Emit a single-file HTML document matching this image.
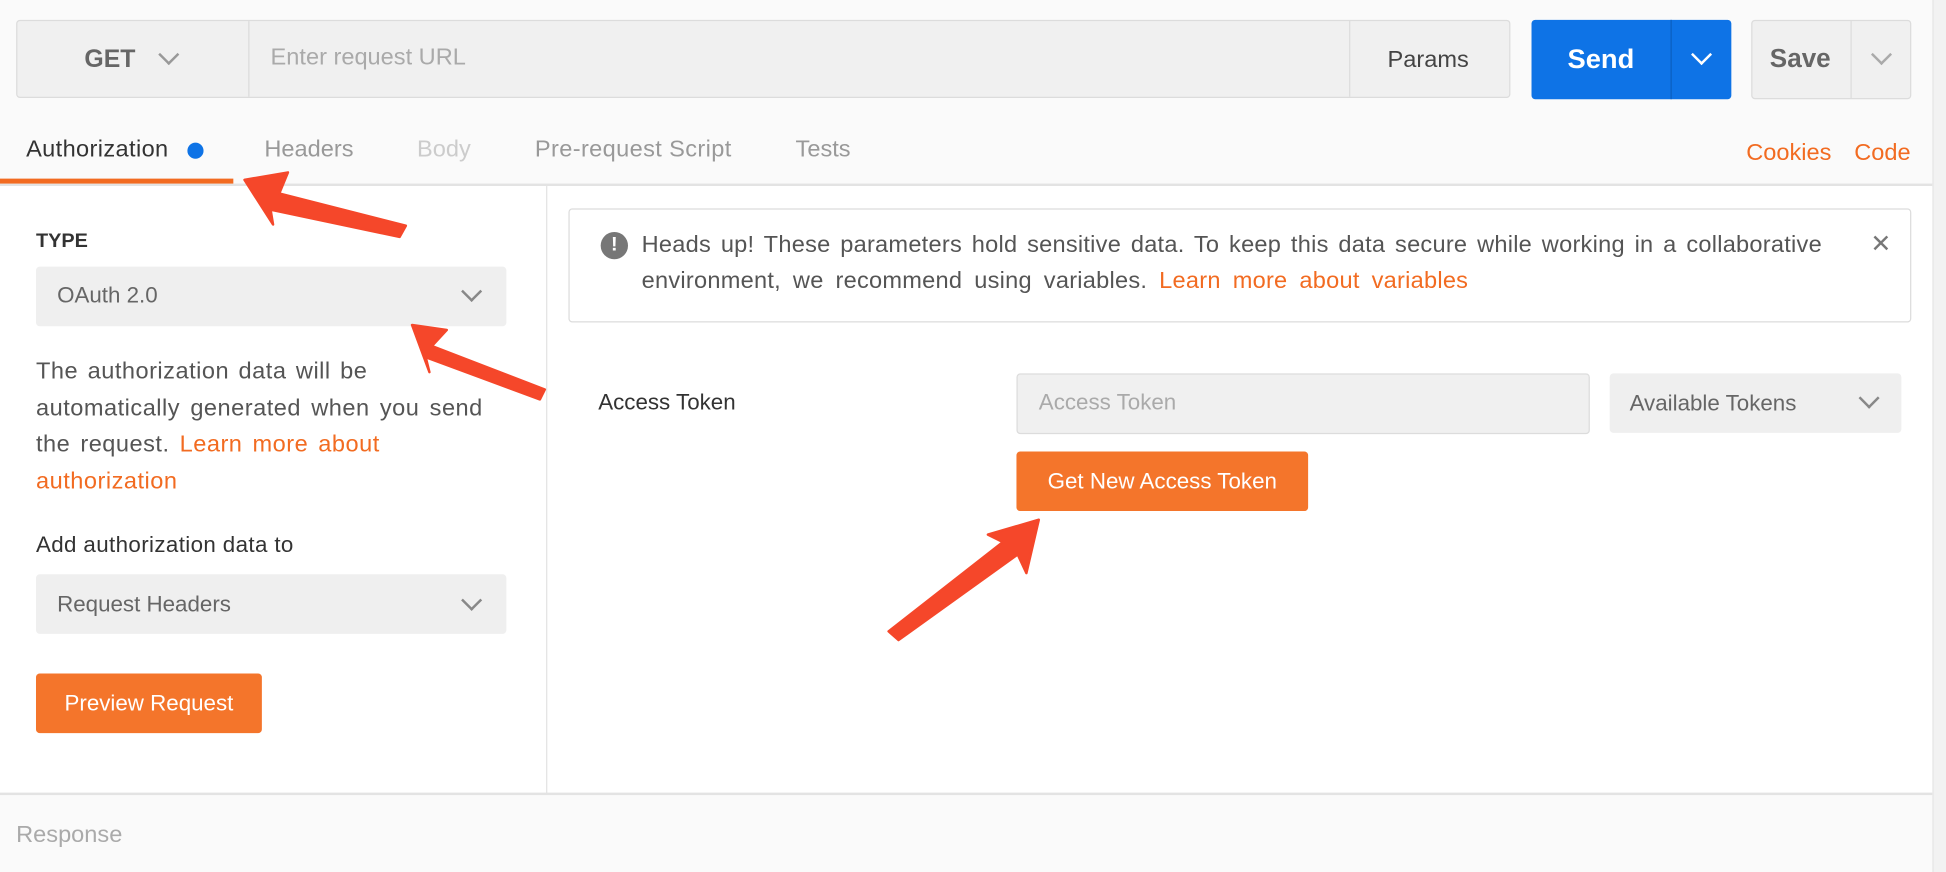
<!DOCTYPE html>
<html><head><meta charset="utf-8"><style>
html,body{margin:0;padding:0;width:1946px;height:872px;overflow:hidden;background:#fafafa}
#w{position:absolute;left:0;top:0;width:1568px;height:703px;transform:scale(1.2411,1.2404);transform-origin:0 0;font-family:"Liberation Sans",sans-serif;color:#505050}
.a{position:absolute;white-space:nowrap}
.j{display:block;text-align:justify;text-align-last:justify;white-space:normal}
.chev{position:absolute;width:10px;height:10px;border-right:2px solid #888;border-bottom:2px solid #888;transform:rotate(45deg)}
.sel{position:absolute;background:#efefef;border-radius:3px;font-size:18px;color:#666}
.org{color:#f26b21}
.btn{position:absolute;background:#f4752b;color:#fff;border-radius:3px;font-size:18px;text-align:center}
</style></head><body><div id="w">
<div class="a" style="left:13px;top:16px;width:1202px;height:61px;border:1px solid #dcdcdc;border-radius:3px;background:#f0f0f0"></div>
<div class="a" style="left:200px;top:17px;width:1px;height:61px;background:#dcdcdc"></div>
<div class="a" style="left:1087px;top:17px;width:1px;height:61px;background:#dcdcdc"></div>
<div class="a" style="left:68px;top:37px;font-size:20px;font-weight:bold;color:#666">GET</div>
<div class="chev" style="left:130px;top:38px;border-color:#999"></div>
<div class="a" style="left:218px;top:36px;font-size:19px;color:#aaa">Enter request URL</div>
<div class="a" style="left:1118px;top:38px;font-size:19px;color:#444">Params</div>
<div class="a" style="left:1234px;top:16px;width:161px;height:64px;background:#0e73e6;border-radius:3px"></div>
<div class="a" style="left:1346px;top:16px;width:1px;height:64px;background:#0b5fc0"></div>
<div class="a" style="left:1263px;top:35px;font-size:22px;font-weight:bold;color:#fff">Send</div>
<div class="chev" style="left:1365px;top:38px;border-color:#fff"></div>
<div class="a" style="left:1411px;top:16px;width:127px;height:62px;border:1px solid #dcdcdc;border-radius:3px;background:#f0f0f0"></div>
<div class="a" style="left:1491px;top:17px;width:1px;height:62px;background:#dcdcdc"></div>
<div class="a" style="left:1426px;top:36px;font-size:21px;font-weight:bold;color:#666">Save</div>
<div class="chev" style="left:1510px;top:38px;border-color:#aaa"></div>
<div class="a" style="left:21px;top:110px;font-size:19px;color:#333;letter-spacing:0.3px">Authorization</div>
<div class="a" style="left:151px;top:115px;width:13px;height:13px;border-radius:50%;background:#0e73e6"></div>
<div class="a" style="left:213px;top:110px;font-size:19px;color:#999">Headers</div>
<div class="a" style="left:336px;top:110px;font-size:19px;color:#ccc">Body</div>
<div class="a" style="left:431px;top:110px;font-size:19px;color:#999;letter-spacing:0.3px">Pre-request Script</div>
<div class="a" style="left:641px;top:110px;font-size:19px;color:#999">Tests</div>
<div class="a org" style="left:1407px;top:113px;font-size:19px">Cookies</div>
<div class="a org" style="left:1494px;top:113px;font-size:19px">Code</div>
<div class="a" style="left:0;top:148px;width:1557px;height:2px;background:#e3e3e3"></div>
<div class="a" style="left:0;top:144px;width:188px;height:4px;background:#f26b21"></div>
<div class="a" style="left:0;top:150px;width:1557px;height:490px;background:#fff"></div>
<div class="a" style="left:440px;top:150px;width:1px;height:490px;background:#e3e3e3"></div>
<div class="a" style="left:0;top:639px;width:1557px;height:2px;background:#e3e3e3"></div>
<div class="a" style="left:1557px;top:0;width:11px;height:703px;background:#f2f2f2;border-left:1px solid #e6e6e6"></div>
<div class="a" style="left:29px;top:186px;font-size:16px;font-weight:bold;color:#333">TYPE</div>
<div class="sel" style="left:29px;top:215px;width:379px;height:48px"><span class="a" style="left:17px;top:13px">OAuth 2.0</span></div>
<div class="chev" style="left:374px;top:229px"></div>
<div class="a" style="left:29px;top:285px;font-size:19px;line-height:29.5px;color:#555;letter-spacing:0.4px">
<span class="j" style="width:267px">The authorization data will be</span>
<span class="j" style="width:360px">automatically generated when you send</span>
<span class="j" style="width:277px">the request. <span class="org">Learn more about</span></span>
<span class="org">authorization</span></div>
<div class="a" style="left:29px;top:429px;font-size:18px;color:#333;letter-spacing:0.3px">Add authorization data to</div>
<div class="sel" style="left:29px;top:463px;width:379px;height:48px"><span class="a" style="left:17px;top:14px">Request Headers</span></div>
<div class="chev" style="left:374px;top:478px"></div>
<div class="btn" style="left:29px;top:543px;width:182px;height:48px;line-height:49px">Preview Request</div>
<div class="a" style="left:458px;top:168px;width:1080px;height:90px;border:1px solid #dcdcdc;border-radius:3px;background:#fff"></div>
<div class="a" style="left:484px;top:187px;width:22px;height:22px;border-radius:50%;background:#777;color:#fff;font-weight:bold;font-size:16px;text-align:center;line-height:22px">!</div>
<div class="a" style="left:517px;top:183px;font-size:19px;line-height:29px;color:#555;letter-spacing:0.2px">
<span class="j" style="width:951px">Heads up! These parameters hold sensitive data. To keep this data secure while working in a collaborative</span>
<span class="j" style="width:666px">environment, we recommend using variables. <span class="org">Learn more about variables</span></span></div>
<div class="a" style="left:1507px;top:184px;font-size:20px;color:#777">✕</div>
<div class="a" style="left:482px;top:314px;font-size:18px;color:#333">Access Token</div>
<div class="a" style="left:819px;top:301px;width:460px;height:47px;border:1px solid #dcdcdc;border-radius:3px;background:#f0f0f0"></div>
<div class="a" style="left:837px;top:314px;font-size:18px;color:#aaa">Access Token</div>
<div class="sel" style="left:1297px;top:301px;width:235px;height:48px"><span class="a" style="left:16px;top:14px">Available Tokens</span></div>
<div class="chev" style="left:1500px;top:315px"></div>
<div class="btn" style="left:819px;top:364px;width:235px;height:48px;line-height:49px">Get New Access Token</div>
<div class="a" style="left:13px;top:663px;font-size:19px;color:#aaa">Response</div>
<svg class="a" style="left:0;top:0" width="1568" height="703">
<g fill="#f5472a" stroke="#f5472a" stroke-linejoin="round" stroke-width="2">
<polygon points="197,145 232,139 225,156 327,182 322,191 218,169 220,181"/>
<polygon points="332,262 360,266 348,279 439,314 435,322 343,288 346,300"/>
<polygon points="837,419 827,462 820,447 724,516 716,509 808,437 796,431"/>
</g></svg>
</div></body></html>
